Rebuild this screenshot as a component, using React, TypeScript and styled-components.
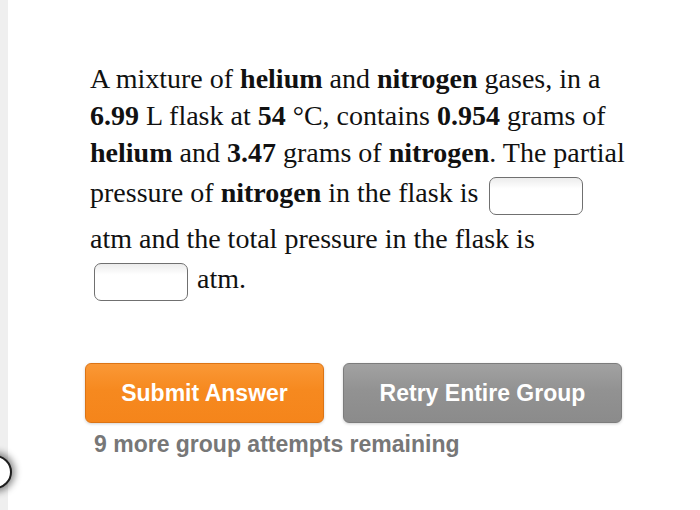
import React from 'react';
import styled, { createGlobalStyle } from 'styled-components';

const GlobalStyle = createGlobalStyle`
  html, body {
    margin: 0;
    padding: 0;
    background: #ffffff;
  }
  #root {
    width: 700px;
    height: 510px;
    overflow: hidden;
  }
`;

const Page = styled.div`
  position: relative;
  width: 700px;
  height: 510px;
  display: flex;
  background: #ffffff;
  overflow: hidden;
`;

const SideStrip = styled.div`
  width: 8px;
  flex-shrink: 0;
  background: #efefef;
`;

const Content = styled.main`
  flex: 1;
  padding: 60px 0 0 77px;
  display: flex;
  flex-direction: column;
`;

const Question = styled.p`
  margin: 0 0 0 5px;
  width: 538px;
  font-family: 'Liberation Serif', 'Times New Roman', serif;
  font-size: 28px;
  line-height: 37px;
  color: #111111;
`;

const Answer = styled.span`
  display: inline-block;
  width: 94px;
  height: 38px;
  margin: 6px 2px 5px 4px;
  box-sizing: border-box;
  border: 1.5px solid #707070;
  border-radius: 7px;
  background: linear-gradient(#ececec, #ffffff 30%);
  vertical-align: middle;
`;

const Actions = styled.div`
  display: flex;
  gap: 19px;
  margin-top: 57px;
`;

const ActionButton = styled.button<{ $variant: 'primary' | 'secondary' }>`
  height: 60px;
  width: ${props => props.$variant === 'primary' ? '239px' : '279px'};
  border-radius: 6px;
  border: 1px solid ${props => props.$variant === 'primary' ? '#dc7415' : '#7c7c7c'};
  background: ${props => props.$variant === 'primary'
    ? 'linear-gradient(#fa9836, #f6891f 45%, #f5851b)'
    : 'linear-gradient(#a2a2a2, #929292 45%, #8b8b8b)'};
  box-shadow: 0 1px 3px rgba(0, 0, 0, 0.18);
  color: #ffffff;
  font-family: 'Liberation Sans', Arial, sans-serif;
  font-weight: bold;
  font-size: 23px;
  padding: 0;
  cursor: pointer;
`;

const Attempts = styled.div`
  margin: 8px 0 0 9px;
  font-family: 'Liberation Sans', Arial, sans-serif;
  font-weight: bold;
  font-size: 23px;
  color: #777777;
`;

const EdgeKnob = styled.div`
  position: absolute;
  left: -22px;
  top: 455px;
  width: 34px;
  height: 34px;
  border-radius: 50%;
  background: #ffffff;
  border: 2px solid #1e1e1e;
  box-sizing: border-box;
  box-shadow: 0 0 7px 3px rgba(0, 0, 0, 0.45);
`;

export default function App() {
  return (
    <Page>
      <GlobalStyle />
      <SideStrip />
      <Content>
        <Question>
          A mixture of <b>helium</b> and <b>nitrogen</b> gases, in a <b>6.99</b> L flask at <b>54</b> °C,
          contains <b>0.954</b> grams of <b>helium</b> and <b>3.47</b> grams of <b>nitrogen</b>. The
          partial pressure of <b>nitrogen</b> in the flask is <Answer /> atm and the total pressure in
          the flask is <Answer /> atm.
        </Question>
        <Actions>
          <ActionButton $variant="primary">Submit Answer</ActionButton>
          <ActionButton $variant="secondary">Retry Entire Group</ActionButton>
        </Actions>
        <Attempts>9 more group attempts remaining</Attempts>
      </Content>
      <EdgeKnob />
    </Page>
  );
}
